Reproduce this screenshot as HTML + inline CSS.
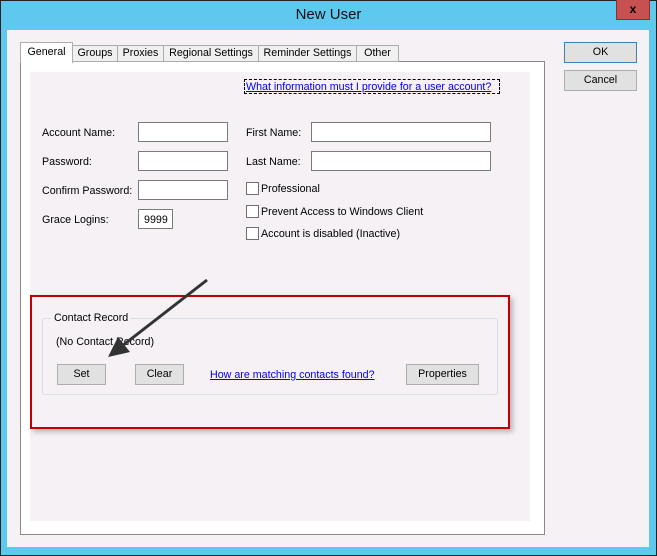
<!DOCTYPE html>
<html><head><style>
*{margin:0;padding:0;box-sizing:border-box}
body{width:657px;height:556px;background:#5fc8ef;position:relative;overflow:hidden;font-family:"Liberation Sans",sans-serif;font-size:10.7px;color:#000}
.a{position:absolute}
.frame{left:0;top:0;width:657px;height:556px;border:1px solid #222}
.client{left:7px;top:30px;width:642px;height:517px;background:#f5f1f5}
.title{left:0;top:6px;width:657px;text-align:center;font-size:15px;color:#111}
.close{left:616px;top:0;width:34px;height:20px;background:#c75050;border:1px solid #8a3030;border-top:none;color:#000;font-weight:bold;font-size:12px;text-align:center;line-height:19px}
.btn{background:#e1e1e1;border:1px solid #adadad;text-align:center;line-height:19px}
.tab{top:45px;height:17px;border:1px solid #acacac;background:#f0f0f0;text-align:center;line-height:15px}
.panel{left:20px;top:61px;width:525px;height:474px;background:#fff;border:1px solid #898989}
.inner{left:30px;top:72px;width:500px;height:449px;background:#f5f1f5}
.in{background:#fff;border:1px solid #7a7a7a;height:20px}
.cb{width:13px;height:13px;border:1px solid #707070;background:#fff}
.lnk{color:#0000ee;text-decoration:underline}
</style></head><body>
<div class="a frame"></div>
<div class="a title">New User</div>
<div class="a close">x</div>
<div class="a client"></div>
<div class="a panel"></div>
<div class="a inner"></div>
<div class="a tab" style="left:72px;width:46px">Groups</div>
<div class="a tab" style="left:117px;width:47px">Proxies</div>
<div class="a tab" style="left:163px;width:96px">Regional Settings</div>
<div class="a tab" style="left:258px;width:99px">Reminder Settings</div>
<div class="a tab" style="left:356px;width:43px">Other</div>
<div class="a" style="left:20px;top:42px;width:53px;height:21px;background:#fff;border:1px solid #acacac;border-bottom:none;text-align:center;line-height:18px">General</div>
<div class="a btn" style="left:564px;top:42px;width:73px;height:21px;border-color:#3c7fb1">OK</div>
<div class="a btn" style="left:564px;top:70px;width:73px;height:21px">Cancel</div>
<div class="a lnk" style="left:244px;top:79px;border:1px dashed #000;padding:1px 8px 0 1px;text-decoration:none"><span class="lnk">What information must I provide for a user account?</span></div>
<div class="a" style="left:42px;top:127px">Account Name:</div>
<div class="a" style="left:42px;top:156px">Password:</div>
<div class="a" style="left:42px;top:185px">Confirm Password:</div>
<div class="a" style="left:42px;top:214px">Grace Logins:</div>
<div class="a in" style="left:138px;top:122px;width:90px"></div>
<div class="a in" style="left:138px;top:151px;width:90px"></div>
<div class="a in" style="left:138px;top:180px;width:90px"></div>
<div class="a in" style="left:138px;top:209px;width:35px;padding:4px 0 0 5px">9999</div>
<div class="a" style="left:246px;top:127px">First Name:</div>
<div class="a" style="left:246px;top:156px">Last Name:</div>
<div class="a in" style="left:311px;top:122px;width:180px"></div>
<div class="a in" style="left:311px;top:151px;width:180px"></div>
<div class="a cb" style="left:246px;top:182px"></div><div class="a" style="left:261px;top:183px">Professional</div>
<div class="a cb" style="left:246px;top:205px"></div><div class="a" style="left:261px;top:206px">Prevent Access to Windows Client</div>
<div class="a cb" style="left:246px;top:227px"></div><div class="a" style="left:261px;top:228px">Account is disabled (Inactive)</div>
<div class="a" style="left:30px;top:295px;width:480px;height:134px;border:2px solid #c00000;box-shadow:3px 3px 5px rgba(0,0,0,0.25)"></div>
<div class="a" style="left:42px;top:318px;width:456px;height:77px;border:1px solid #d8dde6;border-radius:3px"></div>
<div class="a" style="left:51px;top:312px;background:#f5f1f5;padding:0 3px">Contact Record</div>
<div class="a" style="left:56px;top:336px">(No Contact Record)</div>
<div class="a btn" style="left:57px;top:364px;width:49px;height:21px">Set</div>
<div class="a btn" style="left:135px;top:364px;width:49px;height:21px">Clear</div>
<div class="a lnk" style="left:210px;top:369px">How are matching contacts found?</div>
<div class="a btn" style="left:406px;top:364px;width:73px;height:21px">Properties</div>
<svg class="a" style="left:0;top:0" width="657" height="556"><line x1="207" y1="280" x2="122" y2="346" stroke="#333" stroke-width="3"/><polygon points="108,357 118,337 130,352" fill="#333"/></svg>
</body></html>
